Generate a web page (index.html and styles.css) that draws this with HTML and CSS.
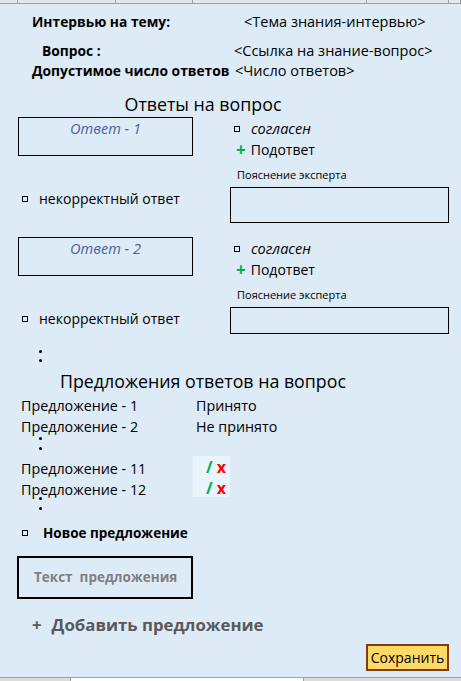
FILE: index.html
```html
<!DOCTYPE html>
<html lang="ru">
<head>
    <meta charset="UTF-8">
    <title>Ответы на вопрос</title>
    <link rel="stylesheet" href="styles.css">
</head>
<body>
    <div class="sheet">
        <div class="ruler">
            <span></span><span></span><span></span><span></span><span></span><span></span>
        </div>

        <div class="content">
            <div class="info">
                <div class="info-row first">
                    <span class="info-label">Интервью на тему:</span>
                    <span class="info-value">&lt;Тема знания-интервью&gt;</span>
                </div>
                <div class="info-row second">
                    <span class="info-label">Вопрос :</span>
                    <span class="info-value">&lt;Ссылка на знание-вопрос&gt;</span>
                </div>
                <div class="info-row third">
                    <span class="info-label">Допустимое число ответов</span>
                    <span class="info-value">&lt;Число ответов&gt;</span>
                </div>
            </div>

            <div class="title">Ответы на вопрос</div>

            <div class="answer">
                <div class="answer-box">Ответ - 1</div>
                <div class="answer-side">
                    <div class="check-line"><span class="check"></span><em>согласен</em></div>
                    <div class="plus-line"><span class="plus">+</span>Подответ</div>
                    <div class="note">Пояснение эксперта</div>
                </div>
                <div class="wrong"><span class="check"></span>некорректный ответ</div>
                <div class="expert-box"></div>
            </div>

            <div class="answer second-answer">
                <div class="answer-box">Ответ - 2</div>
                <div class="answer-side">
                    <div class="check-line"><span class="check"></span><em>согласен</em></div>
                    <div class="plus-line"><span class="plus">+</span>Подответ</div>
                    <div class="note">Пояснение эксперта</div>
                </div>
                <div class="wrong"><span class="check"></span>некорректный ответ</div>
                <div class="expert-box short"></div>
            </div>

            <div class="dots dots-answers"><i></i><i></i></div>

            <div class="title title-offers">Предложения ответов на вопрос</div>

            <div class="offers">
                <div class="offer-name">Предложение - 1</div>
                <div class="offer-state">Принято</div>
                <div class="offer-name">Предложение - 2</div>
                <div class="offer-state">Не принято</div>
            </div>

            <div class="dots dots-tight"><i></i><i></i></div>

            <div class="offers pending">
                <div class="offer-names">
                    <div>Предложение - 11</div>
                    <div>Предложение - 12</div>
                </div>
                <div class="offer-actions">
                    <div><span class="ok">/</span> <span class="no">x</span></div>
                    <div><span class="ok">/</span> <span class="no">x</span></div>
                </div>
            </div>

            <div class="dots dots-last"><i></i><i></i></div>

            <div class="new-offer"><span class="check"></span>Новое предложение</div>

            <div class="offer-box">Текст&nbsp; предложения</div>

            <div class="add-offer"><span class="add-plus">+</span>Добавить предложение</div>

            <button class="save" type="button">Сохранить</button>
        </div>

        <div class="tabs">
            <span class="tab"></span><span class="tab active"></span><span class="tab"></span>
        </div>
    </div>
</body>
</html>
```

FILE: styles.css
```css
body {
    margin: 0;
    font-family: "Open Sans", "Noto Sans", sans-serif;
    color: #000;
}
.sheet {
    width: 461px;
    height: 681px;
    background-color: #ddebf7;
    display: flex;
    flex-direction: column;
    overflow: hidden;
}
.ruler {
    display: grid;
    grid-template-columns: 18px 98px 77px 174px 82px 1fr;
    height: 3px;
    background-color: #e6e6e6;
    border-bottom: 1px solid #9e9e9e;
}
.ruler span {
    border-right: 1px solid #9e9e9e;
}
.content {
    flex: 1;
    display: flex;
    flex-direction: column;
    align-items: flex-start;
}
.info {
    margin-top: 8px;
}
.info-row {
    display: grid;
    grid-template-columns: 234px auto;
    line-height: 20px;
}
.info-row.second {
    margin-top: 9px;
}
.info-label {
    font-size: 13.8px;
    font-weight: bold;
    padding-left: 32px;
}
.info-value {
    font-size: 14.5px;
}
.first .info-value {
    padding-left: 10px;
}
.second .info-label {
    padding-left: 42px;
}
.third .info-value {
    padding-left: 1px;
}
.title {
    width: 406px;
    text-align: center;
    font-size: 17.8px;
    line-height: 24px;
    margin-top: 11px;
}
.answer {
    display: grid;
    grid-template-columns: 175px 219px;
    column-gap: 37px;
    margin: 1px 0 0 18px;
    font-size: 14px;
}
.second-answer {
    margin-top: 14px;
}
.answer-box {
    box-sizing: border-box;
    height: 39px;
    border: 1px solid #000;
    text-align: center;
    font-style: italic;
    font-size: 14.5px;
    line-height: 22px;
    color: #4660a6;
}
.answer-side {
    padding: 1px 0 0 4px;
}
.check-line,
.plus-line {
    display: flex;
    align-items: center;
    line-height: 21px;
}
.check {
    display: inline-block;
    box-sizing: border-box;
    width: 6px;
    height: 6px;
    border: 1px solid #000;
    margin-right: 11px;
}
.check-line em {
    font-size: 14.5px;
}
.plus {
    color: #00b050;
    font-weight: bold;
    font-size: 17px;
    margin: 0 5px 0 2px;
}
.note {
    font-size: 11px;
    line-height: 16px;
    margin: 7px 0 0 3px;
}
.wrong {
    align-self: start;
    display: flex;
    align-items: center;
    line-height: 20px;
    padding: 6px 0 0 4px;
}
.expert-box {
    box-sizing: border-box;
    height: 36px;
    margin-top: 4px;
    border: 1px solid #000;
}
.expert-box.short {
    height: 27px;
}
.dots {
    display: flex;
    flex-direction: column;
    gap: 6px;
    margin-left: 39px;
}
.dots i {
    width: 3px;
    height: 3px;
    border-radius: 50%;
    background-color: #000;
}
.dots-answers {
    margin-top: 16px;
}
.dots-tight {
    gap: 7px;
}
.dots-last {
    gap: 7px;
}
.title-offers {
    margin-top: 7px;
}
.offers {
    display: grid;
    grid-template-columns: 172px auto;
    margin: 2px 0 0 21px;
    font-size: 14.3px;
    line-height: 21px;
}
.offer-state {
    padding-left: 3px;
}
.pending {
    margin-top: 6px;
    height: 41px;
}
.offer-names {
    padding-top: 2px;
}
.offer-actions {
    box-sizing: border-box;
    width: 37px;
    height: 41px;
    padding: 1px 0 0 13px;
    background-color: #eaf4fc;
    font-size: 16px;
    font-weight: bold;
}
.ok {
    color: #00b050;
}
.no {
    color: #ff0000;
}
.new-offer {
    display: flex;
    align-items: center;
    margin: 13px 0 0 22px;
    font-size: 13.5px;
    font-weight: bold;
    line-height: 20px;
}
.new-offer .check {
    margin-right: 15px;
}
.offer-box {
    box-sizing: border-box;
    width: 176px;
    height: 43px;
    margin: 13px 0 0 17px;
    padding-left: 15px;
    border: 2px solid #000;
    font-size: 13.5px;
    font-weight: bold;
    line-height: 39px;
    color: #7f7f7f;
}
.add-offer {
    margin: 14px 0 0 32px;
    font-size: 16.8px;
    font-weight: bold;
    line-height: 24px;
    color: #595959;
}
.add-plus {
    margin-right: 10px;
}
.save {
    box-sizing: border-box;
    width: 83px;
    height: 27px;
    margin: 7px 0 0 366px;
    padding: 0;
    background-color: #ffd966;
    border: 2px solid #843c0c;
    font-family: "Open Sans", sans-serif;
    font-size: 14px;
    color: #000;
}
.tabs {
    display: grid;
    grid-template-columns: 70px 234px 1fr;
    height: 3px;
    border-top: 1px solid #9e9e9e;
}
.tab {
    background-color: #dcdcdc;
}
.tab.active {
    background-color: #fff;
    border-left: 1px solid #9e9e9e;
    border-right: 1px solid #9e9e9e;
}
```
